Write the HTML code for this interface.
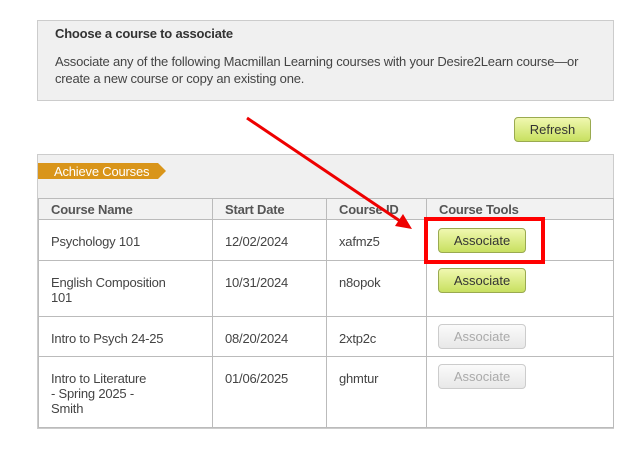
<!DOCTYPE html>
<html><head><style>
body{margin:0;width:627px;height:462px;background:#fff;font-family:"Liberation Sans",Arial,sans-serif;font-size:13px;color:#444;position:relative;overflow:hidden}
.abs{position:absolute}
.top{left:37px;top:20px;width:577px;height:81px;background:#f0f0f0;border:1px solid #ccc;box-sizing:border-box}
.btn{position:absolute;box-sizing:border-box;border:1px solid #9aaa50;border-radius:4px;background:linear-gradient(#f0f8b0,#c8e060);text-align:center;color:#333;font-size:13px}
.dis{border-color:#ccc;background:linear-gradient(#fafafa,#e8e8e8);color:#aaa}
.panel{left:37px;top:154px;width:577px;height:275px;background:#f0f0f0;border:1px solid #ccc;box-sizing:border-box}
table{position:absolute;left:38px;top:198px;border-collapse:collapse;width:575px;background:#fff;table-layout:fixed}
td,th{border:1px solid #bbb;vertical-align:top;text-align:left;padding:0 12px;font-size:13px;color:#444;box-sizing:border-box;letter-spacing:-0.2px}
th{background:#f2f2f2;font-weight:bold;height:21px;padding-top:4px;line-height:13px;color:#555}
td{line-height:15px;padding-top:14px}
</style></head><body>
<div class="abs top"></div>
<div class="abs" style="left:55px;top:26px;font-weight:bold;color:#333;letter-spacing:-0.2px">Choose a course to associate</div>
<div class="abs" style="left:55px;top:53px;line-height:17px;color:#444;letter-spacing:-0.2px">Associate any of the following Macmillan Learning courses with your Desire2Learn course—or<br>create a new course or copy an existing one.</div>
<div class="btn" style="left:514px;top:117px;width:77px;height:25px;line-height:23px">Refresh</div>
<div class="abs panel"></div>
<div class="abs" style="left:38px;top:163px;width:120px;height:16px;background:#d9951a"></div>
<div class="abs" style="left:158px;top:163px;width:0;height:0;border-top:8px solid transparent;border-bottom:8px solid transparent;border-left:8px solid #d9951a"></div>
<div class="abs" style="left:54px;top:165px;color:#fff;font-size:13px;line-height:13px;letter-spacing:-0.2px">Achieve Courses</div>
<table>
<colgroup><col style="width:174px"><col style="width:114px"><col style="width:100px"><col style="width:187px"></colgroup>
<tr><th>Course Name</th><th>Start Date</th><th>Course ID</th><th>Course Tools</th></tr>
<tr style="height:41px"><td>Psychology 101</td><td>12/02/2024</td><td>xafmz5</td><td></td></tr>
<tr style="height:56px"><td>English Composition<br>101</td><td>10/31/2024</td><td>n8opok</td><td></td></tr>
<tr style="height:40px"><td>Intro to Psych 24-25</td><td>08/20/2024</td><td>2xtp2c</td><td></td></tr>
<tr style="height:71px"><td>Intro to Literature<br>- Spring 2025 -<br>Smith</td><td>01/06/2025</td><td>ghmtur</td><td></td></tr>
</table>
<div class="btn" style="left:438px;top:228px;width:88px;height:25px;line-height:23px">Associate</div>
<div class="btn" style="left:438px;top:268px;width:88px;height:25px;line-height:23px">Associate</div>
<div class="btn dis" style="left:438px;top:324px;width:88px;height:25px;line-height:23px">Associate</div>
<div class="btn dis" style="left:438px;top:364px;width:88px;height:25px;line-height:23px">Associate</div>
<div class="abs" style="left:424px;top:217px;width:121px;height:47px;border:4px solid #f00;box-sizing:border-box"></div>
<svg class="abs" style="left:0;top:0" width="627" height="462">
<line x1="247" y1="118" x2="400" y2="221" stroke="#e00" stroke-width="3"/>
<polygon points="412,229 395,226 403,214" fill="#e00"/>
</svg>
</body></html>
